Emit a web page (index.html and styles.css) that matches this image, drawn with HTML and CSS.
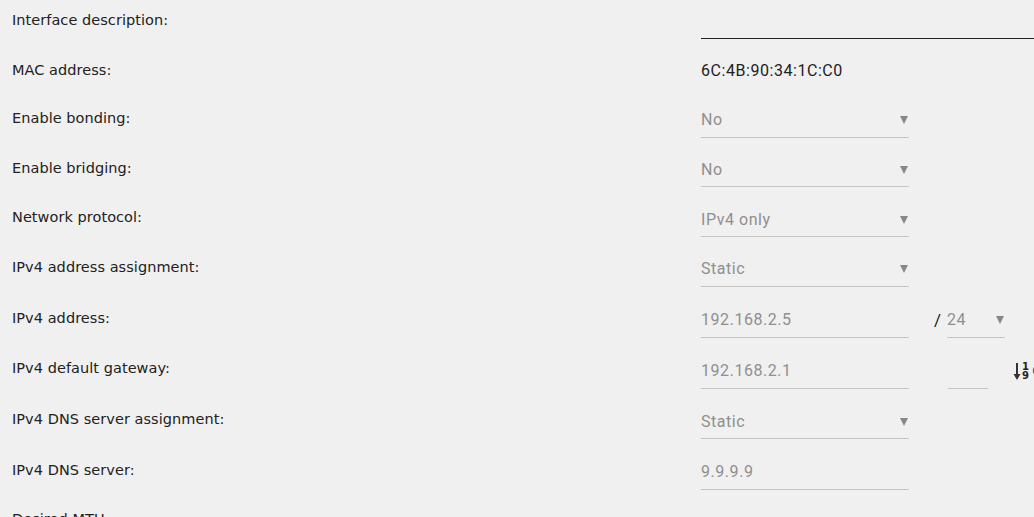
FILE: index.html
```html
<!DOCTYPE html>
<html lang="en">
<head>
  <meta charset="UTF-8" />
  <title>Network interface</title>
  <link rel="stylesheet" href="styles.css">
</head>
<body>
  <div id="form">
    <div class="row h50">
      <div class="label low">Interface description:</div>
      <div class="field wide"></div>
    </div>
    <div class="row h50">
      <div class="label low">MAC address:</div>
      <div class="value">6C:4B:90:34:1C:C0</div>
    </div>
    <div class="row h49">
      <div class="label">Enable bonding:</div>
      <div class="field select">No</div>
    </div>
    <div class="row h50">
      <div class="label mid">Enable bridging:</div>
      <div class="field select drop">No</div>
    </div>
    <div class="row h50">
      <div class="label">Network protocol:</div>
      <div class="field select drop">IPv4 only</div>
    </div>
    <div class="row h51">
      <div class="label">IPv4 address assignment:</div>
      <div class="field select">Static</div>
    </div>
    <div class="row h51">
      <div class="label">IPv4 address:</div>
      <div class="field">192.168.2.5</div>
      <div class="slash">/</div>
      <div class="field select mask">24</div>
    </div>
    <div class="row h50">
      <div class="label high">IPv4 default gateway:</div>
      <div class="field">192.168.2.1</div>
      <div class="field metric"></div>
      <div class="sort">
        <svg width="8" height="17" viewBox="0 0 8 17"><path d="M4 0v13" stroke="#333" stroke-width="2" fill="none"/><path d="M0.5 11h7L4 17z" fill="#333"/></svg>
        <span class="digits"><span>1</span><span>9</span></span>
      </div>
      <div class="cut">6</div>
    </div>
    <div class="row h51">
      <div class="label">IPv4 DNS server assignment:</div>
      <div class="field select drop">Static</div>
    </div>
    <div class="row h49">
      <div class="label">IPv4 DNS server:</div>
      <div class="field">9.9.9.9</div>
    </div>
    <div class="row h49">
      <div class="label">Desired MTU:</div>
    </div>
  </div>
</body>
</html>
```

FILE: styles.css
```css
html, body {
  overflow: hidden;
}

body {
  font-family: 'DejaVu Sans', sans-serif;
  background: #f0f0f0;
  margin: 0;
  height: 517px;
  color: #222;
}

#form {
  padding-left: 12px;
  height: 517px;
  overflow: hidden;
}

.row {
  display: flex;
  align-items: flex-start;
}

.h49 { height: 49px; }
.h50 { height: 50px; }
.h51 { height: 51px; }

.label {
  width: 689px;
  flex: none;
  font-size: 14.5px;
  letter-spacing: 0.05px;
  line-height: 20px;
  padding-top: 8px;
}

.label.low { padding-top: 10px; }
.label.mid { padding-top: 9px; }
.label.high { padding-top: 7px; }

.value {
  font-family: Roboto, sans-serif;
  font-size: 16px;
  letter-spacing: 0.55px;
  line-height: 20px;
  padding-top: 11px;
  color: #222;
}

.field {
  position: relative;
  flex: none;
  box-sizing: border-box;
  width: 208px;
  height: 38px;
  padding-top: 10px;
  font-family: Roboto, sans-serif;
  font-size: 16px;
  letter-spacing: 0.55px;
  line-height: 20px;
  color: #8f8f8f;
  border-bottom: 1px solid #c4c4c4;
}

.field.drop {
  padding-top: 11px;
}

.wide {
  width: 340px;
  height: 39px;
  border-bottom-color: #222;
}

.select::after {
  content: "";
  position: absolute;
  right: 1px;
  top: 16px;
  border-left: 4px solid transparent;
  border-right: 4px solid transparent;
  border-top: 8px solid #888;
}

.select.drop::after {
  top: 17px;
}

.slash {
  width: 38px;
  flex: none;
  padding: 10px 0 0 25px;
  box-sizing: border-box;
  font-family: Roboto, sans-serif;
  font-size: 17px;
  line-height: 20px;
}

.mask {
  width: 58px;
}

.metric {
  width: 40px;
  margin-left: 39px;
}

.sort {
  display: flex;
  align-items: center;
  gap: 1px;
  margin-left: 25px;
  padding-top: 11px;
}

.digits {
  display: flex;
  flex-direction: column;
  font-family: 'DejaVu Sans', sans-serif;
  font-size: 10px;
  font-weight: bold;
  line-height: 9px;
  width: 6px;
}

.cut {
  margin-left: 4px;
  padding-top: 10px;
  font-size: 13px;
  line-height: 20px;
  color: #555;
}
```
